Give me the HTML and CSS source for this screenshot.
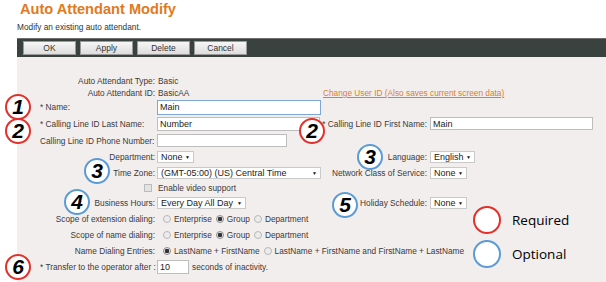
FILE: index.html
```html
<!DOCTYPE html>
<html>
<head>
<meta charset="utf-8">
<link rel="stylesheet" href="styles.css">
</head>
<body>
<div class="page">
  <h1 class="title">Auto Attendant Modify</h1>
  <p class="subtitle">Modify an existing auto attendant.</p>
  <div class="toolbar">
    <button class="btn">OK</button>
    <button class="btn">Apply</button>
    <button class="btn">Delete</button>
    <button class="btn">Cancel</button>
  </div>
  <div class="form">
    <div class="grid">
      <div class="cell c1 r">Auto Attendant Type:</div>
      <div class="cell c2 pad1">Basic</div>

      <div class="cell c1 r">Auto Attendant ID:</div>
      <div class="cell c2 pad1">BasicAA</div>
      <div class="cell c3s"><a class="link" href="#">Change User ID (Also saves current screen data)</a></div>

      <div class="cell c1">* Name:</div>
      <div class="cell c2"><input class="inp focus w164 h15" value="Main"></div>

      <div class="cell c1">* Calling Line ID Last Name:</div>
      <div class="cell c2"><input class="inp w163 h14" value="Number"></div>
      <div class="cell c3">* Calling Line ID First Name:</div>
      <div class="cell c4"><input class="inp w163 h13" value="Main"></div>

      <div class="cell c1">Calling Line ID Phone Number:</div>
      <div class="cell c2"><input class="inp w130 h13" value=""></div>

      <div class="cell c1 r">Department:</div>
      <div class="cell c2"><span class="sel w37"><span>None</span><span class="caret">&#9660;</span></span></div>
      <div class="cell c3">Language:</div>
      <div class="cell c4"><span class="sel w45"><span>English</span><span class="caret">&#9660;</span></span></div>

      <div class="cell c1 r">Time Zone:</div>
      <div class="cell c2"><span class="sel w164"><span>(GMT-05:00) (US) Central Time</span><span class="caret">&#9660;</span></span></div>
      <div class="cell c3">Network Class of Service:</div>
      <div class="cell c4"><span class="sel w37"><span>None</span><span class="caret">&#9660;</span></span></div>

      <div class="cell c1 r"><span class="checkbox"></span></div>
      <div class="cell c2 pad1">Enable video support</div>

      <div class="cell c1 r">Business Hours:</div>
      <div class="cell c2"><span class="sel w89"><span>Every Day All Day</span><span class="caret">&#9660;</span></span></div>
      <div class="cell c3">Holiday Schedule:</div>
      <div class="cell c4"><span class="sel w37"><span>None</span><span class="caret">&#9660;</span></span></div>

      <div class="cell c1 r">Scope of extension dialing:</div>
      <div class="cell c2s radios">
        <span class="radio"></span><span class="opt">Enterprise</span>
        <span class="radio on"></span><span class="opt">Group</span>
        <span class="radio"></span><span class="opt">Department</span>
      </div>

      <div class="cell c1 r">Scope of name dialing:</div>
      <div class="cell c2s radios">
        <span class="radio"></span><span class="opt">Enterprise</span>
        <span class="radio on"></span><span class="opt">Group</span>
        <span class="radio"></span><span class="opt">Department</span>
      </div>

      <div class="cell c1 r">Name Dialing Entries:</div>
      <div class="cell c2s radios">
        <span class="radio on"></span><span class="opt">LastName + FirstName</span>
        <span class="radio"></span><span class="opt">LastName + FirstName and FirstName + LastName</span>
      </div>

      <div class="cell c1">* Transfer to the operator after :</div>
      <div class="cell c2"><input class="inp w32 h14" value="10"><span class="after">seconds of inactivity.</span></div>
    </div>
  </div>
</div>

<div class="marker red m1">1</div>
<div class="marker red m2a">2</div>
<div class="marker red m2b">2</div>
<div class="marker blue m3a">3</div>
<div class="marker blue m3b">3</div>
<div class="marker blue m4">4</div>
<div class="marker blue m5">5</div>
<div class="marker red m6">6</div>

<div class="legend">
  <div class="legend-item"><span class="legend-circle ring-red"></span><span>Required</span></div>
  <div class="legend-item"><span class="legend-circle ring-blue"></span><span>Optional</span></div>
</div>
</body>
</html>
```

FILE: styles.css
```css
html, body {
  margin: 0;
  padding: 0;
}
body {
  width: 606px;
  height: 282px;
  overflow: hidden;
  position: relative;
  background: #ffffff;
  font-family: "Liberation Sans", Arial, sans-serif;
  color: #333333;
}
.page {
  margin-left: 17px;
}
.title {
  margin: 1px 0 0 3px;
  font-size: 14.6px;
  line-height: 17px;
  font-weight: bold;
  color: #e17a20;
}
.subtitle {
  margin: 4px 0 0 0;
  font-size: 8.3px;
  line-height: 10px;
  color: #333333;
}
.toolbar {
  margin-top: 6px;
  height: 19px;
  box-sizing: border-box;
  border-top: 1px solid #6e6e6e;
  background: #3a4240;
  display: flex;
  align-items: center;
  gap: 4px;
  padding-left: 6px;
}
.btn {
  width: 53px;
  height: 14px;
  box-sizing: border-box;
  margin: 0;
  padding: 0;
  border: 1px solid #9a9a9a;
  background: linear-gradient(#f6f6f6, #dddddd);
  font-family: inherit;
  font-size: 8.5px;
  line-height: 12px;
  color: #333333;
}
.form {
  height: 225px;
  box-sizing: border-box;
  background: #f2eeee;
  padding: 17px 0 0 23px;
}
.grid {
  display: grid;
  grid-template-columns: 117px 166px 107px 176px;
  grid-template-rows: 13px 12px 16px 17px 17px 16px 16px 14px 16px 16px 16px 16px 15px;
  font-size: 8.3px;
  line-height: 10px;
  color: #3a3a3a;
}
.cell {
  display: flex;
  align-items: center;
  white-space: nowrap;
}
.c1 {
  grid-column: 1;
  padding-right: 2px;
}
.r {
  justify-content: flex-end;
}
.c2 {
  grid-column: 2;
}
.c2s {
  grid-column: 2 / span 3;
}
.c3 {
  grid-column: 3;
  justify-content: flex-end;
  padding-right: 3px;
}
.c3s {
  grid-column: 3 / span 2;
}
.c4 {
  grid-column: 4;
}
.pad1 {
  padding-left: 1px;
}
.link {
  color: #d98129;
  text-decoration: underline;
}
.inp {
  box-sizing: border-box;
  margin: 0;
  padding: 0 2px;
  border: 1px solid #bdbdbd;
  background: #ffffff;
  font-family: inherit;
  font-size: 9px;
  color: #222222;
  outline: none;
}
.focus {
  border-color: #7ea6d6;
}
.w164 { width: 164px; }
.w163 { width: 163px; }
.w130 { width: 130px; }
.w32 { width: 32px; }
.w37 { width: 37px; }
.w45 { width: 45px; }
.w89 { width: 89px; }
.h15 { height: 15px; }
.h14 { height: 14px; }
.h13 { height: 13px; }
.sel {
  display: inline-flex;
  align-items: center;
  justify-content: space-between;
  box-sizing: border-box;
  height: 12px;
  border: 1px solid #c9c9c9;
  background: #ffffff;
  padding: 0 3px 0 3px;
  font-size: 9px;
  line-height: 10px;
  color: #222222;
}
.caret {
  font-size: 5px;
  line-height: 6px;
  color: #111111;
}
.checkbox {
  width: 8px;
  height: 8px;
  box-sizing: border-box;
  border: 1px solid #bcbcbc;
  background: #e3e3e3;
  margin-right: 3px;
}
.radios {
  padding-left: 1px;
}
.radio {
  width: 8px;
  height: 8px;
  box-sizing: border-box;
  border: 1px solid #b8b8b8;
  border-radius: 50%;
  background: #ececec;
  margin-left: 4px;
  margin-right: 3px;
  flex: none;
}
.radios .radio:first-child {
  margin-left: 5px;
}
.radio.on {
  border-color: #8c8c8c;
  background: radial-gradient(circle, #333333 0 2px, #e4e4e4 2.5px);
}
.opt {
  color: #3a3a3a;
}
.after {
  margin-left: 3px;
}
.marker {
  position: absolute;
  width: 26px;
  height: 26px;
  box-sizing: border-box;
  border-width: 2px;
  border-style: solid;
  border-radius: 50%;
  background: #ffffff;
  font-family: "Liberation Sans", Arial, sans-serif;
  font-style: italic;
  font-weight: bold;
  font-size: 21px;
  line-height: 22px;
  text-align: center;
  color: #000000;
}
.red { border-color: #e3302a; }
.blue { border-color: #5b9bd5; }
.m1 { left: 5px; top: 94px; }
.m2a { left: 5px; top: 118px; }
.m2b { left: 299px; top: 118px; }
.m3a { left: 84px; top: 158px; }
.m3b { left: 357px; top: 144px; }
.m4 { left: 64px; top: 189px; }
.m5 { left: 332px; top: 192px; }
.m6 { left: 5px; top: 254px; }
.legend {
  position: absolute;
  left: 473px;
  top: 206px;
  display: flex;
  flex-direction: column;
  gap: 6px;
}
.legend-item {
  display: flex;
  align-items: center;
  gap: 11px;
  font-family: "Open Sans", sans-serif;
  font-size: 13.5px;
  color: #000000;
}
.legend-circle {
  width: 28px;
  height: 28px;
  box-sizing: border-box;
  border-width: 2px;
  border-style: solid;
  border-radius: 50%;
  background: #ffffff;
}
.ring-red { border-color: #e3302a; }
.ring-blue { border-color: #5b9bd5; }
```
